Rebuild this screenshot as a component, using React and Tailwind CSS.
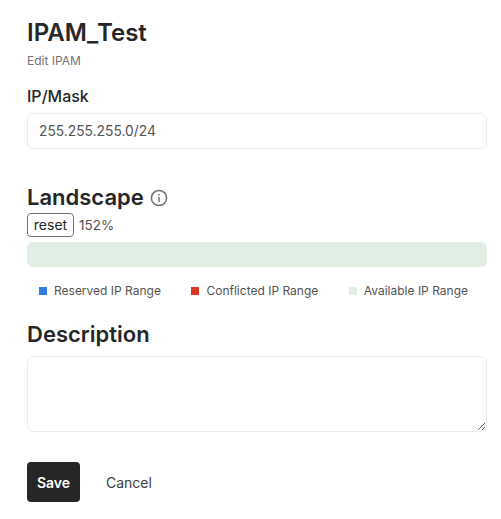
import React from 'react';

const legend = [
  { label: 'Reserved IP Range', color: 'bg-[#2f7de1]' },
  { label: 'Conflicted IP Range', color: 'bg-[#dc3626]' },
  { label: 'Available IP Range', color: 'bg-[#e0eee3]' },
];

const App = () => {
  return (
    <div className="min-h-[519px] bg-white pl-[27px] pr-[14px] pt-[18px] font-['Inter',sans-serif] text-[#262626]">
      <h1 className="text-[24px] leading-[29px] font-semibold">IPAM_Test</h1>
      <p className="mt-[6px] text-[12px] leading-[15px] text-[#737373]">Edit IPAM</p>

      <label className="mt-[18px] block text-[16px] leading-[20px] font-medium">IP/Mask</label>
      <input
        readOnly
        value="255.255.255.0/24"
        className="mt-[7px] block h-[36px] w-full rounded-[6px] border border-[#ededed] px-[11px] text-[13.8px] text-[#525252] outline-none"
      />

      <div className="mt-[35px] flex items-center gap-[6px]">
        <h2 className="text-[22px] leading-[27px] font-semibold">Landscape</h2>
        <svg width="18" height="18" viewBox="0 0 18 18" fill="none" stroke="#737373" strokeWidth="1.5">
          <circle cx="9" cy="9" r="7.6" />
          <path d="M9 8v5" />
          <path d="M9 5v1.4" />
        </svg>
      </div>
      <div className="mt-[2px] flex items-center gap-[5px]">
        <button className="h-[24px] w-[47px] rounded-[4px] border border-[#737373] text-[14px] leading-[20px]">
          reset
        </button>
        <span className="text-[13.5px] text-[#525252]">152%</span>
      </div>
      <div className="mt-[5px] h-[25px] rounded-[6px] bg-[#e0eee3]" />

      <div className="mt-[16px] flex items-center justify-between pl-[12px] pr-[19px]">
        {legend.map((item) => (
          <div key={item.label} className="flex items-center gap-[7px]">
            <span className={`h-[8px] w-[8px] ${item.color}`} />
            <span className="text-[12px] leading-[15px] text-[#525252]">{item.label}</span>
          </div>
        ))}
      </div>

      <h2 className="mt-[23px] text-[22px] leading-[27px] font-semibold">Description</h2>
      <textarea className="mt-[8px] block h-[76px] w-full rounded-[6px] border border-[#ededed] outline-none" />

      <div className="mt-[30px] flex items-center gap-[26px]">
        <button className="h-[40px] w-[53px] rounded-[4px] bg-[#262626] text-[14px] font-semibold text-white">Save</button>
        <button className="text-[14px] text-[#404040]">Cancel</button>
      </div>
    </div>
  );
};

export default App;
